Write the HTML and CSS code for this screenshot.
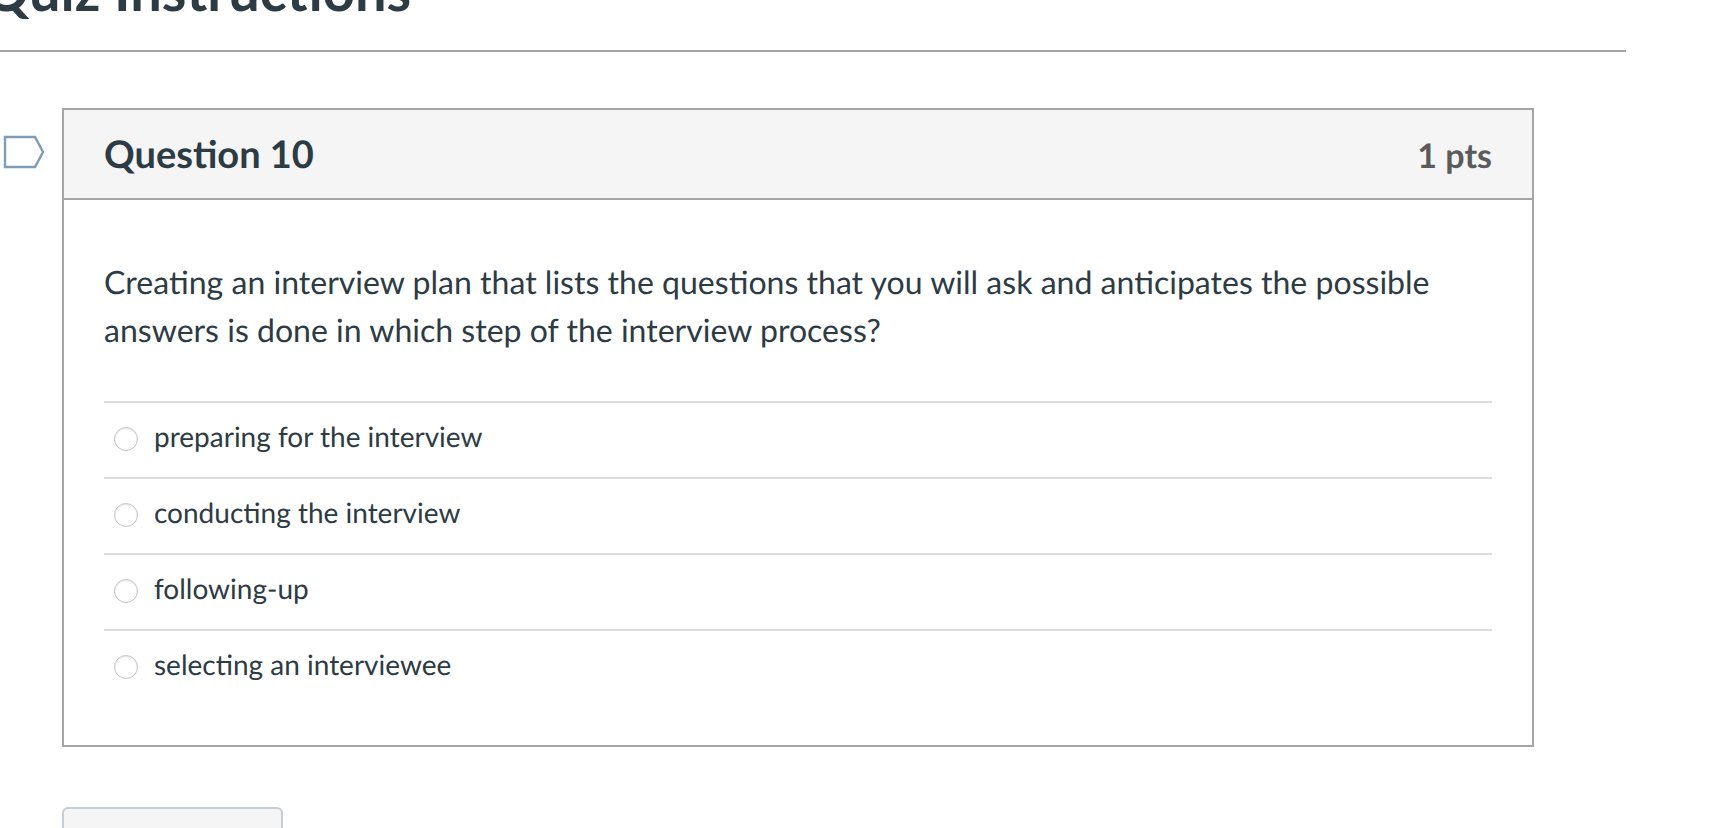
FILE: index.html

```html
<!DOCTYPE html>
<html>
<head>
  <meta charset="UTF-8">
  <title>Quiz Instructions</title>
  <link rel="stylesheet" href="styles.css">
</head>
<body>
  <div class="content">
    <h1 class="quiz_title">Quiz Instructions</h1>
    <div class="question_row">
      <svg class="flag" width="44" height="34" viewBox="0 0 44 34">
        <path d="M5 2H35L43 17L35 32H5Z" fill="none" stroke="#7f9db5" stroke-width="2.4"/>
      </svg>
      <div class="question">
        <div class="question_header">
          <h2 class="question_name">Question 10</h2>
          <span class="question_pts">1 pts</span>
        </div>
        <div class="question_body">
          <p class="question_text">Creating an interview plan that lists the questions that you will ask and anticipates the possible answers is done in which step of the interview process?</p>
          <div class="answers">
            <label class="answer"><span class="radio"></span>preparing for the interview</label>
            <label class="answer"><span class="radio"></span>conducting the interview</label>
            <label class="answer"><span class="radio"></span>following-up</label>
            <label class="answer"><span class="radio"></span>selecting an interviewee</label>
          </div>
        </div>
      </div>
    </div>
    <button class="next_btn"></button>
  </div>
</body>
</html>
```

FILE: styles.css

```css
* {
  margin: 0;
  padding: 0;
  box-sizing: border-box;
}
html, body {
  height: 100%;
  overflow: hidden;
}
body {
  background: #fff;
  color: #2d3b45;
  font-family: Lato, "Noto Sans", sans-serif;
  text-rendering: geometricPrecision;
}
.content {
  width: 1626px;
  margin-top: -40px;
}
.quiz_title {
  height: 92px;
  font-size: 56px;
  line-height: 60px;
  font-weight: 700;
  border-bottom: 2px solid #a5a5a5;
  margin-left: -16px;
}
.question_row {
  display: flex;
  margin-top: 56px;
}
.flag {
  width: 62px;
  height: 34px;
  margin-top: 27px;
  padding-right: 18px;
}
.question {
  width: 1472px;
  height: 639px;
  border: 2px solid #a5a5a5;
}
.question_header {
  display: flex;
  justify-content: space-between;
  align-items: center;
  height: 90px;
  padding: 0 40px;
  background: #f5f5f5;
  border-bottom: 2px solid #a5a5a5;
}
.question_name {
  font-size: 38px;
  font-weight: 700;
}
.question_pts {
  padding-top: 2px;
  font-size: 34px;
  font-weight: 700;
  color: #5b5b5b;
}
.question_body {
  padding: 58px 40px 0;
}
.question_text {
  font-size: 32.05px;
  line-height: 48px;
}
.answers {
  margin-top: 47px;
}
.answer {
  display: flex;
  align-items: center;
  height: 76px;
  padding-bottom: 8px;
  border-top: 2px solid #ddd;
  font-size: 28px;
}
.radio {
  width: 24px;
  height: 24px;
  margin: 6px 16px 0 10px;
  border: 1px solid #c4c4c4;
  border-radius: 50%;
  background: #fff;
  box-shadow: inset 0 1px 2px rgba(0,0,0,0.1);
}
.next_btn {
  display: block;
  width: 221px;
  height: 60px;
  margin-top: 60px;
  margin-left: 62px;
  background: #f5f5f5;
  border: 2px solid #c7cdd1;
  border-radius: 6px;
}
```
